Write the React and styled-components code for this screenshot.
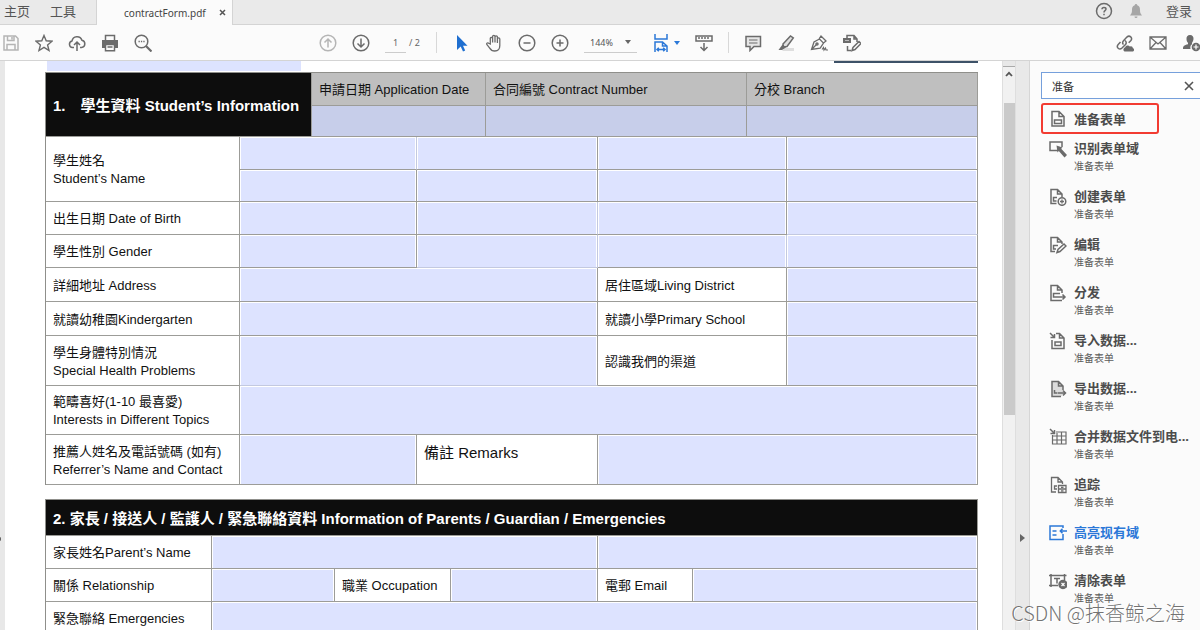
import React, { useState } from "react";
import styled, { createGlobalStyle, css } from "styled-components";

const App = () => {
  return (
    <Window>
      <GlobalStyle />
      <TabBar>
        <NavLink href="#home">主页</NavLink>
        <NavLink href="#tools">工具</NavLink>
        <FileTab>
          <FileName>contractForm.pdf</FileName>
          <CloseTab aria-label="Close tab">
            <svg width="7" height="7" viewBox="0 0 7 7">
              <path d="M1 1l5 5M6 1L1 6" stroke="#555" strokeWidth="1.5" />
            </svg>
          </CloseTab>
        </FileTab>
        <TabBarRight>
          <IconButton aria-label="Help"><HelpIcon /></IconButton>
          <IconButton aria-label="Notifications"><BellIcon /></IconButton>
          <NavLink href="#login">登录</NavLink>
        </TabBarRight>
      </TabBar>
      <Toolbar />
      <Body>
        <LeftEdge>
          <svg width="5" height="8" viewBox="0 0 5 8">
            <path d="M1 2v4L-2 4z" fill="#666" />
          </svg>
        </LeftEdge>
        <Document>
          <PageTop>
            <TopField aria-label="Form title" />
            <TopRule />
          </PageTop>
          <StudentTable />
          <ParentTable />
        </Document>
        <ScrollBar>
          <ScrollSplit />
          <ScrollUp aria-label="Scroll up">
            <svg width="8" height="6" viewBox="0 0 8 6">
              <path d="M1 5l3-3.2L7 5" fill="none" stroke="#555" strokeWidth="1.8" />
            </svg>
          </ScrollUp>
          <ScrollThumb />
        </ScrollBar>
        <Splitter aria-label="Collapse panel">
          <svg width="5" height="10" viewBox="0 0 5 10">
            <path d="M0 1v8l5-4z" fill="#666" />
          </svg>
        </Splitter>
        <ToolPanel />
      </Body>
      <Watermark>CSDN @抹香鲸之海</Watermark>
    </Window>
  );
};

const Toolbar = () => {
  const [page, setPage] = useState("1");

  return (
    <ToolRow>
      <LeftTools>
        <IconButton aria-label="Save"><SaveIcon /></IconButton>
        <IconButton aria-label="Star"><StarIcon /></IconButton>
        <IconButton aria-label="Upload"><CloudIcon /></IconButton>
        <IconButton aria-label="Print"><PrintIcon /></IconButton>
        <IconButton aria-label="Find"><FindIcon /></IconButton>
      </LeftTools>
      <ToolGroup>
        <IconButton aria-label="Previous page">
          <Icon color="#b5b5b5"><circle cx="9" cy="9" r="7.8" /><path d="M9 13.5V5.5M5.5 8.5L9 5l3.5 3.5" /></Icon>
        </IconButton>
        <IconButton aria-label="Next page">
          <Icon><circle cx="9" cy="9" r="7.8" /><path d="M9 4.5v8M5.5 9.5L9 13l3.5-3.5" /></Icon>
        </IconButton>
        <PageBox>
          <PageInput aria-label="Page" value={page} onChange={(e) => setPage(e.target.value)} />
          <span>/ 2</span>
        </PageBox>
        <Divider />
        <IconButton aria-label="Select">
          <Icon><path d="M5 1v15l3.7-3.5 2.3 5 2.2-1-2.2-4.8H15.5z" fill="#1f6fd0" stroke="none" /></Icon>
        </IconButton>
        <IconButton aria-label="Pan"><HandIcon /></IconButton>
        <IconButton aria-label="Zoom out">
          <Icon><circle cx="9" cy="9" r="7.8" /><path d="M5.5 9h7" /></Icon>
        </IconButton>
        <IconButton aria-label="Zoom in">
          <Icon><circle cx="9" cy="9" r="7.8" /><path d="M5.5 9h7M9 5.5v7" /></Icon>
        </IconButton>
        <ZoomBox>
          <ZoomSelect aria-label="Zoom level" defaultValue="144">
            <option value="100">100%</option>
            <option value="144">144%</option>
          </ZoomSelect>
          <Caret color="#666" />
        </ZoomBox>
        <FitButton aria-label="Fit width">
          <Icon color="#2b78d8">
            <path d="M3 0v5h12V0M3 18V8h7.5L15 12v6M10.5 8v4H15M5 15.5h8M6.8 13.8L5 15.5l1.8 1.7M11.2 13.8l1.8 1.7-1.8 1.7" />
          </Icon>
          <Caret color="#2b78d8" />
        </FitButton>
        <IconButton aria-label="Read mode">
          <Icon><path d="M1 2h16v5H1zM4 3v2M7 3v2M10 3v2M13 3v2M9 9v7M5.5 13L9 16.5l3.5-3.5" /></Icon>
        </IconButton>
        <Divider />
        <IconButton aria-label="Comment">
          <Icon><path d="M2 2.5h14.5v10H10L6 16.5v-4H2z" fill="#e6e6e6" /><path d="M5 6h8.5M5 9h8.5" strokeWidth="1.2" /></Icon>
        </IconButton>
        <IconButton aria-label="Highlight"><HighlightIcon /></IconButton>
        <IconButton aria-label="Sign"><SignIcon /></IconButton>
        <IconButton aria-label="Edit tools"><StampIcon /></IconButton>
      </ToolGroup>
      <RightTools>
        <IconButton aria-label="Share link"><LinkIcon /></IconButton>
        <IconButton aria-label="Mail">
          <Icon><path d="M1 3h16v12H1zM1.5 3.5L9 10l7.5-6.5M1.5 14.5l5.5-6M16.5 14.5l-5.5-6" strokeWidth="1.3" /></Icon>
        </IconButton>
        <IconButton aria-label="Add people"><UserIcon /></IconButton>
      </RightTools>
    </ToolRow>
  );
};

const Field = ({ label, ...rest }) => (
  <FieldCell {...rest}>
    <FieldInput aria-label={label} />
  </FieldCell>
);

const Columns = ({ widths }) => {
  const total = widths.reduce((a, b) => a + b, 0);
  return (
    <colgroup>
      {widths.map((w, i) => (
        <Col key={i} $share={(w / total) * 100} />
      ))}
    </colgroup>
  );
};

const StudentTable = () => (
  <FormTable>
    <Columns widths={[194, 72, 105, 69, 112, 149, 40, 191]} />
    <tbody>
      <Row $h={33}>
        <TitleCell colSpan={2} rowSpan={2}>
          <Title><span>1.</span><span>學生資料 Student’s Information</span></Title>
        </TitleCell>
        <HeadCell colSpan={2}>申請日期 Application Date</HeadCell>
        <HeadCell colSpan={2}>合同編號 Contract Number</HeadCell>
        <HeadCell colSpan={2}>分校 Branch</HeadCell>
      </Row>
      <Row $h={31}>
        <Field label="Application Date" colSpan={2} $dim />
        <Field label="Contract Number" colSpan={2} $dim />
        <Field label="Branch" colSpan={2} $dim />
      </Row>
      <Row $h={33}>
        <LabelCell rowSpan={2}>學生姓名<br />Student’s Name</LabelCell>
        <Field label="Name 1" colSpan={2} $softRight />
        <Field label="Name 2" colSpan={2} />
        <Field label="Name 3" colSpan={2} />
        <Field label="Name 4" />
      </Row>
      <Row $h={32}>
        <Field label="Name 5" colSpan={2} />
        <Field label="Name 6" colSpan={2} />
        <Field label="Name 7" colSpan={2} />
        <Field label="Name 8" />
      </Row>
      <Row $h={33}>
        <LabelCell>出生日期 Date of Birth</LabelCell>
        <Field label="Birth 1" colSpan={2} />
        <Field label="Birth 2" colSpan={2} $softRight />
        <Field label="Birth 3" colSpan={2} />
        <Field label="Birth 4" $softBottom />
      </Row>
      <Row $h={33}>
        <LabelCell>學生性別 Gender</LabelCell>
        <Field label="Gender 1" colSpan={2} />
        <Field label="Gender 2" colSpan={2} $softRight $softBottom />
        <Field label="Gender 3" colSpan={2} $softRight />
        <Field label="Gender 4" />
      </Row>
      <Row $h={34}>
        <LabelCell>詳細地址 Address</LabelCell>
        <Field label="Address" colSpan={4} />
        <LabelCell colSpan={2}>居住區域Living District</LabelCell>
        <Field label="Living District" />
      </Row>
      <Row $h={34}>
        <LabelCell>就讀幼稚園Kindergarten</LabelCell>
        <Field label="Kindergarten" colSpan={4} />
        <LabelCell colSpan={2}>就讀小學Primary School</LabelCell>
        <Field label="Primary School" />
      </Row>
      <Row $h={50}>
        <LabelCell>學生身體特別情況<br />Special Health Problems</LabelCell>
        <Field label="Special Health Problems" colSpan={4} $softBottom />
        <LabelCell colSpan={2}>認識我們的渠道</LabelCell>
        <Field label="Channel" />
      </Row>
      <Row $h={49}>
        <LabelCell>範疇喜好(1-10 最喜愛)<br />Interests in Different Topics</LabelCell>
        <Field label="Interests" colSpan={7} />
      </Row>
      <Row $h={50}>
        <LabelCell>推薦人姓名及電話號碼 (如有)<br />Referrer’s Name and Contact</LabelCell>
        <Field label="Referrer" colSpan={2} />
        <LabelCell colSpan={2} $large>備註 Remarks</LabelCell>
        <Field label="Remarks" colSpan={3} />
      </Row>
    </tbody>
  </FormTable>
);

const ParentTable = () => (
  <FormTable>
    <Columns widths={[166, 123, 116, 147, 95, 285]} />
    <tbody>
      <Row $h={36}>
        <TitleCell colSpan={6}>
          2. 家長 / 接送人 / 監護人 / 緊急聯絡資料 Information of Parents / Guardian / Emergencies
        </TitleCell>
      </Row>
      <Row $h={33}>
        <LabelCell>家長姓名Parent’s Name</LabelCell>
        <Field label="Parent 1" colSpan={3} />
        <Field label="Parent 2" colSpan={2} />
      </Row>
      <Row $h={33}>
        <LabelCell>關係 Relationship</LabelCell>
        <Field label="Relationship" />
        <LabelCell>職業 Occupation</LabelCell>
        <Field label="Occupation" />
        <LabelCell>電郵 Email</LabelCell>
        <Field label="Email" />
      </Row>
      <Row $h={33}>
        <LabelCell>緊急聯絡 Emergencies</LabelCell>
        <Field label="Emergencies" colSpan={5} />
      </Row>
    </tbody>
  </FormTable>
);

const ToolPanel = () => {
  const [query, setQuery] = useState("准备");

  return (
    <Panel>
      <SearchBox>
        <SearchInput aria-label="Search tools" value={query} onChange={(e) => setQuery(e.target.value)} />
        <ClearButton aria-label="Clear search" onClick={() => setQuery("")}>
          <svg width="10" height="10" viewBox="0 0 10 10">
            <path d="M1 1l8 8M9 1L1 9" stroke="#555" strokeWidth="1.6" />
          </svg>
        </ClearButton>
      </SearchBox>
      <FeaturedTool>
        <Icon>{docIcons.form}</Icon>
        <ToolName>准备表单</ToolName>
      </FeaturedTool>
      <ToolList>
        {tools.map((tool) => (
          <li key={tool.name}>
            <ToolButton>
              <Icon color={tool.active ? "#2b78d8" : "#6b6b6b"}>{docIcons[tool.icon]}</Icon>
              <ToolText>
                <ToolName $active={tool.active}>{tool.name}</ToolName>
                <ToolSub>准备表单</ToolSub>
              </ToolText>
            </ToolButton>
          </li>
        ))}
      </ToolList>
    </Panel>
  );
};

const tools = [
  { name: "识别表单域", icon: "detect" },
  { name: "创建表单", icon: "create" },
  { name: "编辑", icon: "edit" },
  { name: "分发", icon: "send" },
  { name: "导入数据...", icon: "importData" },
  { name: "导出数据...", icon: "exportData" },
  { name: "合并数据文件到电...", icon: "merge" },
  { name: "追踪", icon: "track" },
  { name: "高亮现有域", icon: "highlight", active: true },
  { name: "清除表单", icon: "clear" },
];

const Icon = ({ color = "#6b6b6b", children }) => (
  <svg width="18" height="18" viewBox="0 0 18 18" fill="none" stroke={color} strokeWidth="1.5">
    {children}
  </svg>
);

const docIcons = {
  form: <path d="M3 1.500h7l5 5v9.500H3zM10 1.500v5h5M5.500 10h7v3.500h-7z" />,
  detect: (
    <>
      <path d="M9 10.500H1V2h12v5" />
      <path d="M7.500 5.500l6 2-1.300 1.300L18 15l-2.500 2.500-5.700-6.500L8.500 12.500z" fill="#6b6b6b" stroke="none" />
    </>
  ),
  create: (
    <>
      <path d="M7.500 15.500H2V1.500h6.500L13 6v3M8.500 1.500V6H13M8 9.500H4.500V13h3" />
      <circle cx="13" cy="13.500" r="3.800" />
      <path d="M13 11.500v4M11 13.500h4" strokeWidth="1.3" />
    </>
  ),
  edit: (
    <path d="M6 15.500H2V1.500h6.500L13 6v2M8.500 1.500V6H13M9 9.500H4.500V13H7M8 16.500l1-3 6-5.500 2 2-6 5.500z" />
  ),
  send: (
    <path d="M13 16.500H2V1.500h6.500L13 6v3M8.500 1.500V6H13M11 9.500H4.500V13H16M13.500 10.500L16 13l-2.500 2.500" />
  ),
  importData: (
    <>
      <path d="M3 8v8.500h12V6l-4.500-4.500H7M10.500 1.500V6H15M6 10h6v3.500H6z" />
      <path d="M1 1l4 4M5.500 2v3.500H1.500" />
    </>
  ),
  exportData: (
    <>
      <path d="M3 16.500V1.500h6.500L14 6v8.500L12 16.500z" fill="#dcdcdc" stroke="none" />
      <path d="M12 16.500H3V1.500h6.500L14 6v4M9.500 1.500V6H14M5.500 10v3h3M9 13h7.500M14 10.500l2.500 2.500-2.500 2.500" />
    </>
  ),
  merge: (
    <>
      <path d="M3.500 7v9h13.500V4H7M3.500 8h13.500M3.500 12h13.500M8 5v11M12.500 4v12" strokeWidth="1.2" />
      <path d="M1 1l4 4M5.500 2v3.500H1.500" />
    </>
  ),
  track: (
    <path d="M7 16H2.500V1.500H9L13.500 6v2M9 1.500V6h4.500M8 10H5.500v3H8M9.500 9.500h7.500v7H9.500zM9.500 13H17M12 11.300h2.500M12 14.800h2.500" strokeWidth="1.3" />
  ),
  highlight: (
    <path d="M14 4V2H1v13.500h13V10M3.500 7h4M3.500 11h4M18 7h-6.500M13.500 4.800L11.300 7l2.200 2.200" />
  ),
  clear: (
    <>
      <path d="M0 3.500h17.500M2 2v13M0 13.500h9M15.500 2v6M5 6.500h6M8 6.500v5" />
      <circle cx="14" cy="12.500" r="4" fill="#6b6b6b" />
      <path d="M12.500 11l3 3M15.500 11l-3 3" stroke="#fff" strokeWidth="1.2" />
    </>
  ),
};

const HelpIcon = () => (
  <Icon>
    <circle cx="9" cy="9" r="7.500" />
    <path d="M7 7.200C7 4.800 11 4.900 11 7.100 11 8.700 9 8.600 9 10.400M9 11.700v1.600" />
  </Icon>
);

const BellIcon = () => (
  <Icon color="#a6a6a6">
    <path d="M9 2a1.300 1.300 0 0 1 1.300 1.200C12.500 4 13 5.500 13 8c0 3 .7 3.800 2 5.500H3C4.300 11.800 5 11 5 8c0-2.500.5-4 2.700-4.800A1.300 1.300 0 0 1 9 2zM7.500 14.500h3a1.500 1.500 0 0 1-3 0z" fill="#a6a6a6" stroke="none" />
  </Icon>
);

const SaveIcon = () => (
  <Icon color="#b5b5b5">
    <path d="M2 2h11.500L16 4.500V16H2zM5.500 2v4.500H12V2M5 16v-5.500h8V16M10 3v2.500" />
  </Icon>
);

const StarIcon = () => (
  <Icon>
    <path d="M9 1.500l2.200 5.300 5.800.4-4.400 3.700 1.400 5.600L9 13.400l-5 3.100 1.400-5.600L1 7.200l5.800-.4z" strokeWidth="1.4" />
  </Icon>
);

const CloudIcon = () => (
  <Icon>
    <path d="M6 13.500H4.500a3.300 3.300 0 0 1-.5-6.500 5.100 5.100 0 0 1 9.900-.8 3.700 3.700 0 0 1-.4 7.300H12M9 17V8M6 11l3-3 3 3" />
  </Icon>
);

const PrintIcon = () => (
  <Icon>
    <path d="M4.500 6V1.500h9V6" />
    <path d="M1 6h16v8h-3v-3H4v3H1z" fill="#6b6b6b" stroke="none" />
    <path d="M4.500 10.500h9v6.200h-9zM6.500 13h5" />
  </Icon>
);

const FindIcon = () => (
  <Icon>
    <circle cx="7.500" cy="7.500" r="6.300" />
    <path d="M12 12l5.500 5.500" strokeWidth="2.200" />
    <path d="M4.500 7.500h1.300M6.900 7.500h1.300M9.300 7.500h1.300" />
  </Icon>
);

const HandIcon = () => (
  <Icon>
    <path
      d="M5.300 10V4.300a1.200 1.200 0 0 1 2.300 0V8.500 2.600a1.200 1.200 0 0 1 2.400 0V8.500 3a1.200 1.200 0 0 1 2.400 0V9 5a1.200 1.200 0 0 1 2.400 0v6.500c0 3.500-2 5.500-5 5.500-2.800 0-4-1-5.300-3.200L1.800 10.500c-.7-1.400 1-2.200 1.900-1.200z"
      strokeWidth="1.3"
    />
  </Icon>
);

const HighlightIcon = () => (
  <Icon>
    <path d="M8 14h9v3H5z" fill="#dedede" stroke="none" />
    <path d="M6 10l7.500-8 2.800 2L10 12.500 6.500 13z" fill="#e0e0e0" />
    <path d="M5.500 10.500l3.500 3L5 16H1.500z" fill="#6b6b6b" stroke="none" />
  </Icon>
);

const SignIcon = () => (
  <Icon>
    <path d="M1.500 15.500L4 8l5.500-3 4 4-3.300 5.200zM9 5l2-3 5 5-2.500 2M2 15l4.500-4.500" strokeWidth="1.300" />
    <circle cx="7" cy="10" r="1" />
    <path d="M12 15.500l1.500-2 .5 2.500 1.500-2 .5 2H18" strokeWidth="1.200" />
  </Icon>
);

const StampIcon = () => (
  <Icon>
    <path d="M4 5V1.500h7L14 5v3M11 1.500V5h3M4.500 12v4.500H8M9 16.500l1-3L16 7.500l2 2-6 6z" />
    <path d="M0 4h8v5H0z" fill="#6b6b6b" stroke="none" />
    <path d="M2 6.500h4" stroke="#bbb" strokeWidth="1" />
  </Icon>
);

const LinkIcon = () => (
  <Icon>
    <path d="M7.500 10.500c-1.500-1.500-.7-3 0-3.800l3.400-3.600c2.700-2.500 6.200.8 3.800 3.600l-2 2M9 6.500c1.700 1.500 1.400 3 .5 4L6 14c-2.700 2.500-6.200-.8-3.800-3.600L4.500 8" />
    <path d="M8.500 17.500a2.300 2.300 0 0 1 .7-4.200 2.600 2.600 0 0 1 4.600-.8 2.400 2.400 0 0 1 3.200 1.800 1.700 1.700 0 0 1 0 3.200z" fill="#6b6b6b" stroke="none" />
  </Icon>
);

const UserIcon = () => (
  <Icon>
    <path d="M8 1c2.500 0 3.700 1.700 3.500 4-.2 2-1 3-1.500 3.800v1.500c-2 1.200-1.800 3.700-1.500 4.700H1c0-3 1-3.700 5-4.700V8.800C5.200 8 4.500 7 4.500 5 4.300 2.700 5.500 1 8 1z" fill="#6b6b6b" stroke="none" />
    <circle cx="14" cy="13" r="4.300" fill="#6b6b6b" stroke="none" />
    <path d="M14 10.500v5M11.500 13h5" stroke="#fff" strokeWidth="1.200" />
  </Icon>
);

const Caret = ({ color }) => (
  <svg width="6" height="4" viewBox="0 0 6 4">
    <path d="M0 0h6L3 4z" fill={color} />
  </svg>
);

const GlobalStyle = createGlobalStyle`
  * {
    box-sizing: border-box;
  }
  body {
    margin: 0;
    overflow: hidden;
    font-family: "Noto Sans", "Noto Sans CJK SC", sans-serif;
  }
  button, input, select {
    margin: 0;
    padding: 0;
    border: 0;
    border-radius: 0;
    background: none;
    color: inherit;
    font: inherit;
    outline: none;
  }
  button {
    cursor: pointer;
  }
  svg {
    display: block;
    flex: none;
  }
`;

const Window = styled.div`
  position: relative;
  display: flex;
  flex-direction: column;
  height: 100vh;
  overflow: hidden;
  background-color: #fbfbfb;
`;

const TabBar = styled.header`
  display: flex;
  flex: none;
  gap: 20px;
  height: 25px;
  padding-left: 4px;
  background-color: #eaeaea;
  border-bottom: 1px solid #d4d4d4;
`;

const NavLink = styled.a`
  color: #555;
  font-size: 13px;
  line-height: 22px;
  text-decoration: none;
`;

const FileTab = styled.div`
  display: flex;
  align-items: center;
  justify-content: space-between;
  width: 137px;
  height: 25px;
  padding: 0 6px 0 27px;
  background-color: #fbfbfb;
  border: solid #d4d4d4;
  border-width: 0 1px;
`;

const FileName = styled.span`
  color: #444;
  font-size: 10px;
`;

const CloseTab = styled.button`
  display: flex;
`;

const TabBarRight = styled.div`
  display: flex;
  gap: 14px;
  margin-left: auto;
  padding-right: 8px;
  height: 22px;

  a {
    margin-left: 7px;
  }
`;

const IconButton = styled.button`
  display: flex;
  flex: none;
  align-items: center;
  justify-content: center;
  width: 18px;
`;

const ToolRow = styled.div`
  display: flex;
  flex: none;
  height: 36px;
  background-color: #fbfbfb;
  border-bottom: 1px solid #d4d4d4;
`;

const ToolGroup = styled.div`
  display: flex;
  align-items: center;
  gap: 15px;
`;

const LeftTools = styled(ToolGroup)`
  width: 319px;
  padding-left: 2px;
`;

const RightTools = styled(ToolGroup)`
  margin-left: auto;
`;

const Divider = styled.div`
  width: 1px;
  height: 21px;
  background-color: #d8d8d8;
`;

const PageBox = styled.label`
  display: flex;
  align-items: center;
  gap: 3px;
  width: 36px;
  color: #666;
  font-size: 9px;
  white-space: nowrap;
`;

const PageInput = styled.input`
  width: 21px;
  height: 20px;
  border-bottom: 1px solid #ccc;
  text-align: center;
`;

const ZoomBox = styled.label`
  display: flex;
  align-items: center;
  width: 53px;
  height: 20px;
  padding: 0 6px;
  border-bottom: 1px solid #ccc;
`;

const ZoomSelect = styled.select`
  flex: 1;
  min-width: 0;
  appearance: none;
  color: #555;
  font-size: 9px;
`;

const FitButton = styled.button`
  display: flex;
  align-items: center;
  justify-content: space-between;
  width: 28px;
`;

const Body = styled.div`
  display: flex;
  flex: 1;
  min-height: 0;
`;

const LeftEdge = styled.div`
  flex: none;
  width: 5px;
  padding-top: 474px;
  background-color: #e8e8e8;
`;

const Document = styled.main`
  flex: 1;
  min-width: 0;
  padding: 0 24px 0 40px;
  overflow: hidden;
  background-color: #fff;
`;

const PageTop = styled.div`
  display: flex;
  justify-content: space-between;
  height: 11px;
  padding-left: 2px;
`;

const TopField = styled.input`
  width: 254px;
  height: 10px;
  background-color: #dde3ff;
`;

const TopRule = styled.div`
  width: 144px;
  height: 2px;
  background-color: #3d5268;
`;

const FormTable = styled.table`
  width: 100%;
  margin-bottom: 14px;
  table-layout: fixed;
  border-collapse: separate;
  border-spacing: 0;
  border: solid #8f8f8b;
  border-width: 1px 0 0 1px;
  color: #111;
  font-family: "Liberation Sans", "Noto Sans CJK TC", sans-serif;
  font-size: 13px;
  line-height: 18px;
`;

const Col = styled.col`
  width: ${(p) => p.$share}%;
`;

const Row = styled.tr`
  td, th {
    height: ${(p) => p.$h}px;
  }
`;

const cell = css`
  border: solid #9c9c98;
  border-width: 0 1px 1px 0;
  text-align: left;
  white-space: nowrap;
`;

const TitleCell = styled.th`
  ${cell}
  padding: 2px 7px 0;
  background-color: #0d0d0d;
  color: #fff;
  font-size: 15px;
  font-weight: bold;
`;

const Title = styled.div`
  display: flex;
  gap: 15px;
`;

const HeadCell = styled.th`
  ${cell}
  padding: 2px 7px 0;
  background-color: #bfbfbf;
  font-weight: normal;
`;

const LabelCell = styled.td`
  ${cell}
  padding: ${(p) => (p.$large ? "9px 7px 0" : "2px 7px 0")};
  vertical-align: ${(p) => (p.$large ? "top" : "middle")};
  font-size: ${(p) => (p.$large ? "15px" : "13px")};
`;

const FieldInput = styled.input`
  display: block;
  width: 100%;
  height: 100%;
`;

const FieldCell = styled.td`
  ${cell}
  padding: ${(p) => (p.$dim ? "0" : "1px 1px 0 1px")};
  border-right-color: ${(p) => (p.$softRight ? "#c3c9e0" : "#9c9c98")};
  border-bottom-color: ${(p) => (p.$softBottom ? "#c3c9e0" : "#9c9c98")};

  ${FieldInput} {
    background-color: ${(p) => (p.$dim ? "#c7ceea" : "#dde3ff")};
  }
`;

const ScrollBar = styled.div`
  display: flex;
  flex: none;
  flex-direction: column;
  align-items: center;
  width: 14px;
  background-color: #f1f1f1;
  border: solid #dedede;
  border-width: 0 1px;
`;

const ScrollSplit = styled.div`
  width: 12px;
  height: 6px;
  background-color: #e8e8e8;
  border-bottom: 1px solid #aaa;
`;

const ScrollUp = styled.button`
  display: flex;
  justify-content: center;
  width: 12px;
  height: 36px;
  padding-top: 4px;
`;

const ScrollThumb = styled.div`
  width: 11px;
  height: 312px;
  background-color: #cacaca;
`;

const Splitter = styled.button`
  display: flex;
  flex: none;
  align-items: flex-start;
  justify-content: center;
  width: 14px;
  padding-top: 472px;
  background-color: #e9e9e9;
  border-right: 1px solid #d6d6d6;
`;

const Panel = styled.aside`
  flex: none;
  width: 170px;
  padding: 11px 0 0 11px;
  overflow: hidden;
  background-color: #fbfbfb;
`;

const SearchBox = styled.div`
  display: flex;
  align-items: center;
  height: 27px;
  margin-bottom: 4px;
  padding: 0 6px 0 10px;
  background-color: #fff;
  border: 1px solid #76a0dc;
  border-right: 0;
`;

const SearchInput = styled.input`
  flex: 1;
  min-width: 0;
  color: #333;
  font-size: 11px;
`;

const ClearButton = styled.button`
  display: flex;
`;

const ToolName = styled.span`
  color: ${(p) => (p.$active ? "#2b78d8" : "#4c4c4c")};
  font-size: 13px;
  font-weight: 700;
  line-height: 20px;
  white-space: nowrap;
`;

const ToolSub = styled.span`
  color: #5c5c5c;
  font-size: 10px;
  line-height: 16px;
`;

const ToolText = styled.span`
  display: flex;
  flex-direction: column;
`;

const FeaturedTool = styled.button`
  display: flex;
  align-items: center;
  gap: 7px;
  width: 118px;
  height: 31px;
  margin-bottom: 4px;
  padding-left: 6px;
  border: 2px solid #f23b31;
  border-radius: 3px;
`;

const ToolList = styled.ul`
  margin: 0;
  padding: 0 0 0 8px;
  list-style: none;
`;

const ToolButton = styled.button`
  display: flex;
  align-items: flex-start;
  gap: 7px;
  height: 48px;
  text-align: left;

  svg {
    margin-top: 2px;
  }
`;

const Watermark = styled.div`
  position: absolute;
  right: 15px;
  bottom: 3px;
  color: rgba(90, 90, 90, 0.85);
  font-family: "Noto Sans CJK SC", sans-serif;
  font-size: 20px;
  font-weight: 300;
  line-height: 28px;
  text-shadow: 1px 1px 0 #fff;
  white-space: nowrap;
  pointer-events: none;
`;

export default App;
